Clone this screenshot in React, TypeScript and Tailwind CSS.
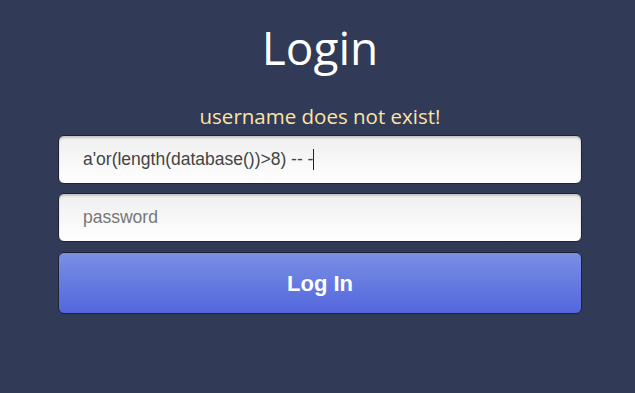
export default function App() {
  return (
    <div className="w-[635px] h-[393px] bg-[#313a56] flex flex-col items-center overflow-hidden pl-[5px]">
      {/* Title */}
      <h1 className="mt-[18px] text-[46px] leading-[58px] text-white font-['Open_Sans',sans-serif]">Login</h1>

      {/* Error message */}
      <p className="mt-[28px] text-[20.5px] leading-[24px] text-[#fde3a7] font-['Open_Sans',sans-serif]">
        username does not exist!
      </p>

      <div className="mt-[7px] w-[524px] flex flex-col font-['Liberation_Sans',Arial,sans-serif]">
        {/* Username input */}
        <div className="h-[49px] rounded-[6px] border border-[#1d2236] bg-gradient-to-b from-[#efefef] to-white shadow-[inset_0_2px_2px_rgba(0,0,0,0.18)] flex items-center pl-[24px] text-[17.5px] text-[#444]">
          <span>a'or(length(database())&gt;8) -- -</span>
          <span className="w-px h-[21px] bg-[#222]" />
        </div>

        {/* Password input */}
        <div className="mt-[9px] h-[49px] rounded-[6px] border border-[#1d2236] bg-gradient-to-b from-[#efefef] to-white shadow-[inset_0_2px_2px_rgba(0,0,0,0.18)] flex items-center pl-[24px] text-[17.5px] text-[#777]">
          password
        </div>

        {/* Button */}
        <button className="mt-[10px] h-[62px] rounded-[6px] border border-[#1d2236] bg-gradient-to-b from-[#7a8fe4] to-[#5366dc] text-white text-[22px] font-bold">
          Log In
        </button>
      </div>
    </div>
  )
}
